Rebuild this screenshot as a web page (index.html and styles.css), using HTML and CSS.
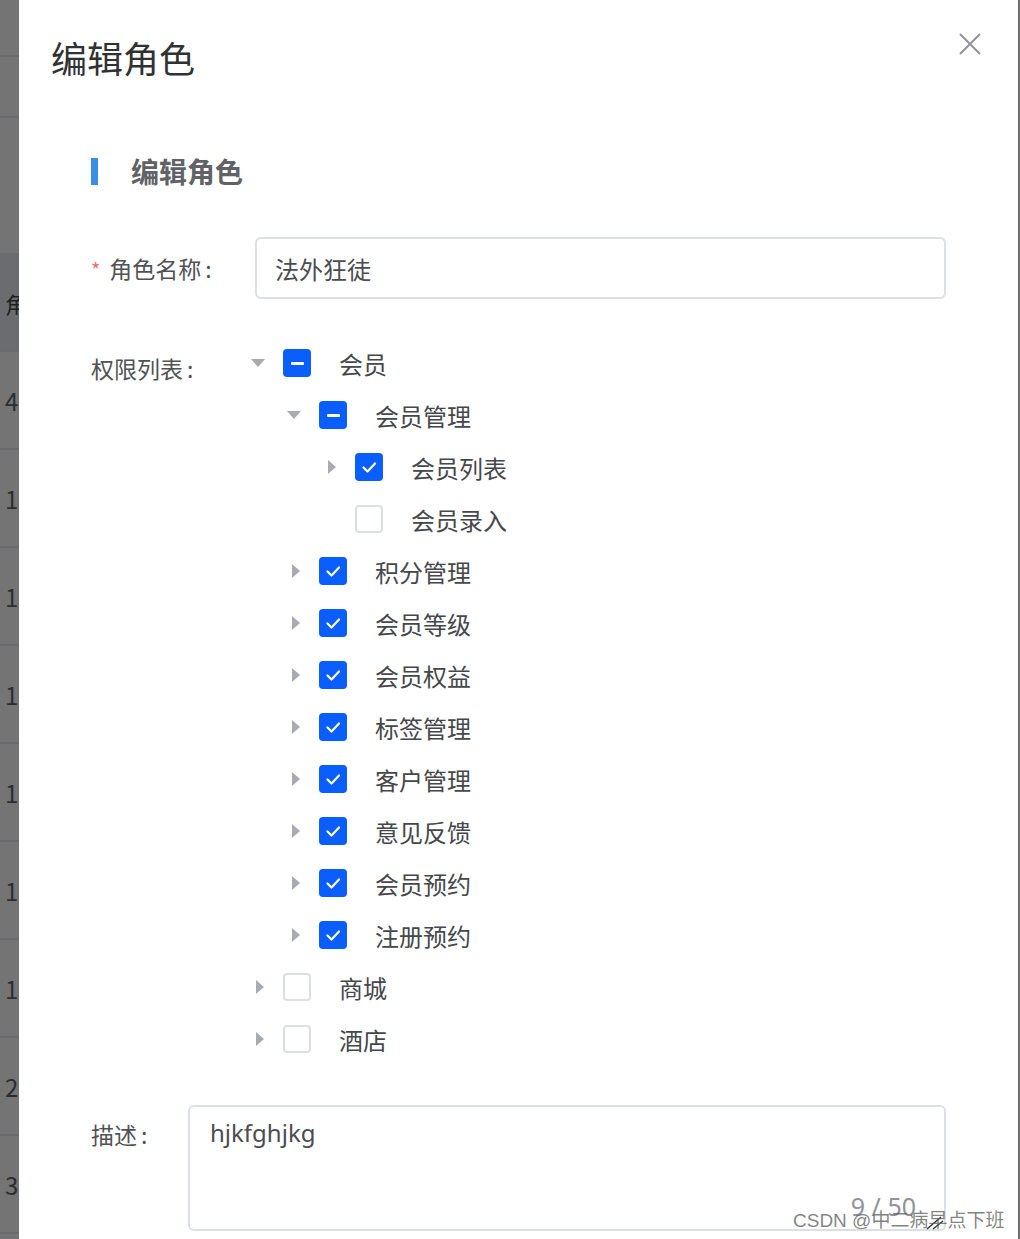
FILE: index.html
```html
<!DOCTYPE html>
<html lang="zh-CN">
<head>
    <meta charset="UTF-8">
    <title>编辑角色</title>
    <link rel="stylesheet" href="styles.css">
</head>
<body>
    <!-- 遮罩下面露出来的表格一角 -->
    <div class="backdrop-table">
        <div class="bt-row" style="height:57px"></div>
        <div class="bt-row" style="height:61px"></div>
        <div class="bt-row" style="height:137px"></div>
        <div class="bt-row bt-head">角</div>
        <div class="bt-row">4</div>
        <div class="bt-row">1</div>
        <div class="bt-row">1</div>
        <div class="bt-row">1</div>
        <div class="bt-row">1</div>
        <div class="bt-row">1</div>
        <div class="bt-row">1</div>
        <div class="bt-row">2</div>
        <div class="bt-row">3</div>
        <div class="bt-row"></div>
    </div>

    <div class="dialog">
        <div class="dialog-header">
            <span class="dialog-title">编辑角色</span>
            <button class="dialog-close" aria-label="关闭">
                <svg width="22" height="22" viewBox="0 0 22 22"><path d="M1 1 L21 21 M21 1 L1 21" stroke="#909399" stroke-width="2" fill="none"/></svg>
            </button>
        </div>

        <div class="dialog-body">
            <div class="section-title">编辑角色</div>

            <div class="form-row">
                <label class="form-label label-name"><span class="required">*</span>角色名称<span class="colon">:</span></label>
                <div class="form-control">
                    <input class="text-input" type="text" value="法外狂徒">
                </div>
            </div>

            <div class="form-row row-tree">
                <label class="form-label label-perm">权限列表<span class="colon">:</span></label>
                <div class="form-control">
                    <div class="tree" id="tree"></div>
                </div>
            </div>

            <div class="form-row row-desc">
                <label class="form-label label-desc">描述<span class="colon">:</span></label>
                <div class="form-control">
                    <div class="textarea-wrap">
                        <textarea class="textarea">hjkfghjkg</textarea>
                        <span class="word-count">9 / 50</span>
                        <svg class="resize-handle" width="18" height="16" viewBox="0 0 18 16"><path d="M1 15 L15 3 M7 15 L17 7" stroke="#303133" stroke-width="1.4" fill="none"/></svg>
                    </div>
                </div>
            </div>
        </div>
    </div>
    <div class="right-edge"></div>

    <div class="watermark">CSDN @中二病早点下班</div>

    <script>
        // 权限树数据: state = checked / half / none, open = 展开
        const treeData = [
            { label: '会员', state: 'half', open: true, children: [
                { label: '会员管理', state: 'half', open: true, children: [
                    { label: '会员列表', state: 'checked', children: [{}] },
                    { label: '会员录入', state: 'none' }
                ]},
                { label: '积分管理', state: 'checked', children: [{}] },
                { label: '会员等级', state: 'checked', children: [{}] },
                { label: '会员权益', state: 'checked', children: [{}] },
                { label: '标签管理', state: 'checked', children: [{}] },
                { label: '客户管理', state: 'checked', children: [{}] },
                { label: '意见反馈', state: 'checked', children: [{}] },
                { label: '会员预约', state: 'checked', children: [{}] },
                { label: '注册预约', state: 'checked', children: [{}] }
            ]},
            { label: '商城', state: 'none', children: [{}] },
            { label: '酒店', state: 'none', children: [{}] }
        ];

        const checkSvg = '<svg width="28" height="28" viewBox="0 0 28 28"><path d="M8.5 14.5 L12.5 18.5 L20 10.5" stroke="#fff" stroke-width="2.2" fill="none" stroke-linecap="round" stroke-linejoin="round"/></svg>';

        function renderNodes(nodes, level, box) {
            nodes.forEach(node => {
                if (!node.label) return;
                const row = document.createElement('div');
                row.className = 'tree-node';
                row.style.paddingLeft = (level * 36) + 'px';

                const arrow = document.createElement('span');
                if (node.children && node.children.length) {
                    arrow.className = 'tree-arrow ' + (node.open ? 'open' : 'closed');
                } else {
                    arrow.className = 'tree-arrow leaf';
                }
                row.appendChild(arrow);

                const cb = document.createElement('span');
                cb.className = 'checkbox ' + node.state;
                if (node.state === 'checked') cb.innerHTML = checkSvg;
                if (node.state === 'half') cb.innerHTML = '<i class="half-bar"></i>';
                row.appendChild(cb);

                const text = document.createElement('span');
                text.className = 'tree-label';
                text.textContent = node.label;
                row.appendChild(text);

                box.appendChild(row);
                if (node.open) renderNodes(node.children, level + 1, box);
            });
        }

        renderNodes(treeData, 0, document.getElementById('tree'));
    </script>
</body>
</html>
```

FILE: styles.css
```css
/* 基础 */
* { box-sizing: border-box; }

body {
    margin: 0;
    height: 1239px;
    overflow: hidden;
    display: flex;
    align-items: flex-start;
    font-family: 'Noto Sans CJK SC', 'Noto Sans', sans-serif;
    background: #737373;
}

/* 左侧被遮罩的表格 */
.backdrop-table {
    width: 19px;
    flex: none;
    overflow: hidden;
    background: #747474;
}
.bt-row {
    height: 98px;
    border-bottom: 2px solid #6a6b6f;
    display: flex;
    align-items: center;
    padding-left: 5px;
    font-size: 24px;
    color: #2c2d30;
    white-space: nowrap;
}
.bt-head {
    height: 97px;
    background: #6b6c70;
    font-size: 22px;
    color: #1f1f22;
}

/* 对话框 */
.dialog {
    width: 999px;
    flex: none;
    height: 1239px;
    background: #fff;
}
.right-edge {
    width: 2px;
    height: 1239px;
    background: #6d6d6d;
}

.dialog-header {
    display: flex;
    justify-content: space-between;
    align-items: flex-start;
    padding: 31px 36px 0 32px;
}
.dialog-title {
    font-size: 36px;
    line-height: 52px;
    color: #303133;
}
.dialog-close {
    border: none;
    background: none;
    padding: 0;
    margin-top: 2px;
    width: 24px;
    height: 24px;
    cursor: pointer;
}

.dialog-body {
    padding: 0 72px;
}

.section-title {
    margin-top: 68px;
    height: 40px;
    line-height: 40px;
    display: flex;
    align-items: center;
    font-size: 28px;
    font-weight: bold;
    color: #606266;
}
.section-title::before {
    content: '';
    width: 7px;
    height: 27px;
    background: #3a8ee6;
    margin-right: 33px;
}

/* 表单 */
.form-row {
    display: flex;
    align-items: flex-start;
    margin-top: 46px;
}
.row-tree { margin-top: 36px; }
.row-desc { margin-top: 40px; }

.form-label {
    flex: none;
    font-size: 23px;
    line-height: 62px;
    color: #505255;
    white-space: nowrap;
}
.colon { margin-left: 4px; }
.label-name { width: 164px; }
.label-perm { width: 155px; line-height: 62px; }
.label-desc { width: 97px; line-height: 58px; }
.required {
    color: #f56c6c;
    margin-right: 9px;
    font-size: 20px;
}
.form-control { flex: 1; position: relative; }

.text-input {
    width: 100%;
    height: 62px;
    border: 2px solid #dcdfe6;
    border-radius: 6px;
    padding: 0 18px;
    font-family: inherit;
    font-size: 24px;
    color: #4a4c50;
    outline: none;
}

/* 权限树 */
.tree-node {
    display: flex;
    align-items: center;
    height: 52px;
}
.tree-arrow {
    width: 24px;
    height: 24px;
    margin-right: 13px;
    display: flex;
    align-items: center;
    justify-content: center;
}
.tree-arrow.open::before {
    content: '';
    border-left: 7px solid transparent;
    border-right: 7px solid transparent;
    border-top: 8px solid #a8abb2;
}
.tree-arrow.closed::before {
    content: '';
    border-top: 7px solid transparent;
    border-bottom: 7px solid transparent;
    border-left: 8px solid #a8abb2;
    margin-left: 4px;
}
.checkbox {
    width: 28px;
    height: 28px;
    border-radius: 4px;
    margin-right: 28px;
    display: flex;
    align-items: center;
    justify-content: center;
    flex: none;
}
.checkbox.none {
    border: 2px solid #dcdfe6;
    background: #fff;
}
.checkbox.checked,
.checkbox.half {
    background: #0b5efe;
}
.half-bar {
    width: 13px;
    height: 3px;
    background: #fff;
    border-radius: 1px;
}
.tree-label {
    font-size: 24px;
    color: #45474b;
}

/* 描述 */
.textarea-wrap {
    position: relative;
    height: 126px;
}
.textarea {
    width: 100%;
    height: 126px;
    border: 2px solid #dcdfe6;
    border-radius: 6px;
    padding: 8px 20px;
    font-family: 'Noto Sans', sans-serif;
    font-size: 24px;
    line-height: 36px;
    color: #4a4c50;
    resize: none;
    outline: none;
}
.word-count {
    position: absolute;
    right: 30px;
    bottom: 8px;
    background: #fff;
    font-family: 'Noto Sans', sans-serif;
    font-size: 25px;
    color: #909399;
}
.resize-handle {
    position: absolute;
    right: 2px;
    bottom: 1px;
}

/* 水印 */
.watermark {
    position: absolute;
    left: 793px;
    top: 1205px;
    font-family: 'Liberation Sans', 'Noto Sans CJK SC', sans-serif;
    font-size: 19px;
    color: rgba(90, 90, 90, 0.75);
    white-space: nowrap;
}
```
